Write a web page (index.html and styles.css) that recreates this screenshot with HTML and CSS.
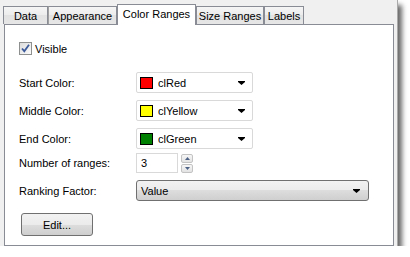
FILE: index.html
```html
<!DOCTYPE html>
<html lang="en">
<head>
  <meta charset="UTF-8">
  <title>Color Ranges</title>
  <link rel="stylesheet" href="styles.css">
</head>
<body>

  <div class="frame">
    <div class="tabs">
      <div class="tab tab-data">Data</div>
      <div class="tab tab-appearance">Appearance</div>
      <div class="tab tab-color active">Color Ranges</div>
      <div class="tab tab-size">Size Ranges</div>
      <div class="tab tab-labels">Labels</div>
    </div>

    <div class="panel">
      <div class="row row-visible">
        <span class="checkbox">
          <svg width="11" height="11" viewBox="0 0 11 11">
            <path d="M2 5.5 L4.3 8.2 L9 1.8" fill="none" stroke="#3c5a9a" stroke-width="1.8"/>
          </svg>
        </span>
        <span>Visible</span>
      </div>

      <div class="row row-combo first">
        <span class="label">Start Color:</span>
        <div class="combo">
          <span class="swatch red"></span>
          <span class="combo-text">clRed</span>
          <svg class="arrow" width="7" height="4" viewBox="0 0 7 4"><path d="M0 0h7v1H0z M0 1h7L3.5 4z" fill="#000"/></svg>
        </div>
      </div>

      <div class="row row-combo">
        <span class="label">Middle Color:</span>
        <div class="combo">
          <span class="swatch yellow"></span>
          <span class="combo-text">clYellow</span>
          <svg class="arrow" width="7" height="4" viewBox="0 0 7 4"><path d="M0 0h7v1H0z M0 1h7L3.5 4z" fill="#000"/></svg>
        </div>
      </div>

      <div class="row row-combo">
        <span class="label">End Color:</span>
        <div class="combo">
          <span class="swatch green"></span>
          <span class="combo-text">clGreen</span>
          <svg class="arrow" width="7" height="4" viewBox="0 0 7 4"><path d="M0 0h7v1H0z M0 1h7L3.5 4z" fill="#000"/></svg>
        </div>
      </div>

      <div class="row row-spin">
        <span class="label">Number of ranges:</span>
        <div class="spin-edit">3</div>
        <div class="spin-buttons">
          <div class="spin-btn">
            <svg width="5" height="3" viewBox="0 0 5 3"><path d="M0 3h5L2.5 0z" fill="#4d6185"/></svg>
          </div>
          <div class="spin-btn">
            <svg width="5" height="3" viewBox="0 0 5 3"><path d="M0 0h5L2.5 3z" fill="#4d6185"/></svg>
          </div>
        </div>
      </div>

      <div class="row row-ranking">
        <span class="label">Ranking Factor:</span>
        <div class="dropdown">
          <span class="combo-text">Value</span>
          <svg class="arrow" width="7" height="4" viewBox="0 0 7 4"><path d="M0 0h7v1H0z M0 1h7L3.5 4z" fill="#000"/></svg>
        </div>
      </div>

      <div class="row row-button">
        <button class="btn">Edit...</button>
      </div>
    </div>
  </div>

</body>
</html>
```

FILE: styles.css
```css
html, body {
  margin: 0;
  background: #ffffff;
  font-family: "Liberation Sans", Arial, sans-serif;
  font-size: 11px;
  color: #000;
}

.frame {
  width: 398px;
  height: 246px;
  box-sizing: border-box;
  background: #f0f0f0;
  border-right: 1px solid #a9a9a9;
  box-shadow: 4px 5px 5px rgba(0, 0, 0, 0.6);
}

.tabs {
  display: flex;
  align-items: flex-end;
  height: 24px;
  padding-left: 3px;
}

.tab {
  box-sizing: border-box;
  height: 18px;
  padding-top: 3px;
  text-align: center;
  border: 1px solid #898c95;
  border-bottom: none;
  background: linear-gradient(#f5f5f5, #ececec 50%, #e2e2e2 50%, #e6e6e6);
}

.tab-data { width: 45px; }
.tab-appearance { width: 69px; border-left-color: #a0a0a0; }
.tab-color { width: 79px; }
.tab-size { width: 68px; }
.tab-labels { width: 40px; }

.tab.active {
  position: relative;
  z-index: 1;
  height: 21px;
  margin-bottom: -1px;
  padding-top: 3px;
  background: #ffffff;
}

.panel {
  box-sizing: border-box;
  margin-left: 4px;
  width: 390px;
  height: 222px;
  background: #ffffff;
  border: 1px solid #898c95;
  padding: 17px 0 0 14px;
}

.row {
  display: flex;
  align-items: center;
}

.label {
  width: 117px;
  flex: none;
}

.row-visible {
  height: 13px;
}

.checkbox {
  box-sizing: border-box;
  width: 13px;
  height: 13px;
  margin-right: 3px;
  border: 1px solid #8e8f8f;
  background: linear-gradient(135deg, #dcdcdc, #fbfbfb);
  display: flex;
  align-items: center;
  justify-content: center;
}

.row-combo {
  height: 21px;
  margin-top: 7px;
}

.row-combo.first {
  margin-top: 17px;
}

.combo {
  box-sizing: border-box;
  width: 117px;
  height: 21px;
  border: 1px solid #d9d9d9;
  border-radius: 2px;
  display: flex;
  align-items: center;
  padding: 0 7px 0 3px;
}

.swatch {
  box-sizing: border-box;
  width: 13px;
  height: 12px;
  border: 1px solid #000;
  margin-right: 5px;
}

.red { background: #ff0000; }
.yellow { background: #ffff00; }
.green { background: #008000; }

.combo-text {
  flex: 1;
}

.row-spin {
  height: 20px;
  margin-top: 4px;
}

.spin-edit {
  box-sizing: border-box;
  width: 42px;
  height: 20px;
  border: 1px solid #d9d9d9;
  padding: 3px 0 0 4px;
}

.spin-buttons {
  margin-left: 3px;
  display: flex;
  flex-direction: column;
  gap: 1px;
}

.spin-btn {
  box-sizing: border-box;
  width: 12px;
  height: 9px;
  border: 1px solid #c3c3c3;
  border-radius: 2px;
  background: linear-gradient(#f6f6f6, #e3e3e3);
  display: flex;
  align-items: center;
  justify-content: center;
}

.row-ranking {
  height: 21px;
  margin-top: 7px;
}

.dropdown {
  box-sizing: border-box;
  width: 233px;
  height: 21px;
  border: 1px solid #707070;
  border-radius: 3px;
  background: linear-gradient(#f2f2f2, #ebebeb 50%, #dddddd 50%, #cfcfcf);
  display: flex;
  align-items: center;
  padding: 0 8px 0 4px;
}

.row-button {
  margin-top: 12px;
  padding-left: 2px;
}

.btn {
  box-sizing: border-box;
  width: 72px;
  height: 23px;
  border: 1px solid #707070;
  border-radius: 3px;
  background: linear-gradient(#f2f2f2, #ebebeb 50%, #dddddd 50%, #cfcfcf);
  font-family: "Liberation Sans", Arial, sans-serif;
  font-size: 11px;
  color: #000;
  padding: 0;
}
```
